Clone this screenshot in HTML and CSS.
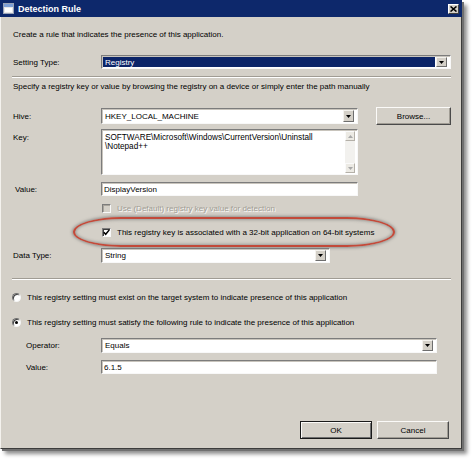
FILE: index.html
```html
<!DOCTYPE html>
<html>
<head>
<meta charset="utf-8">
<link rel="stylesheet" href="styles.css">
</head>
<body>
<div class="dialog">
  <div class="titlebar">
    <svg class="app-icon" width="11" height="11" viewBox="0 0 11 11">
      <rect x="0.5" y="0.5" width="10" height="10" fill="#e8e8e8" stroke="#9aa4b8"/>
      <rect x="1" y="1" width="9" height="3" fill="#7d9fd6"/>
      <rect x="2" y="5" width="7" height="4" fill="#ffffff"/>
    </svg>
    <span class="title">Detection Rule</span>
    <span class="close">
      <svg width="7" height="6" viewBox="0 0 7 6"><path d="M0.5 0.5 L6.5 5.5 M6.5 0.5 L0.5 5.5" stroke="#000" stroke-width="1.6"/></svg>
    </span>
  </div>
  <div class="content">
    <div class="intro">Create a rule that indicates the presence of this application.</div>
    <div class="row setting-row">
      <span class="label">Setting Type:</span>
      <div class="combo combo-selected w-full">
        <span class="combo-text"><span class="sel-text">Registry</span></span>
        <span class="drop"><svg width="5" height="3" viewBox="0 0 5 3"><polygon points="0,0 5,0 2.5,3" fill="#000"/></svg></span>
      </div>
    </div>
    <div class="sep"></div>
    <div class="hint">Specify a registry key or value by browsing the registry on a device or simply enter the path manually</div>
    <div class="row hive-row">
      <span class="label">Hive:</span>
      <div class="combo w-mid">
        <span class="combo-text big">HKEY_LOCAL_MACHINE</span>
        <span class="drop"><svg width="5" height="3" viewBox="0 0 5 3"><polygon points="0,0 5,0 2.5,3" fill="#000"/></svg></span>
      </div>
      <button class="btn browse">Browse...</button>
    </div>
    <div class="row key-row">
      <span class="label label-top">Key:</span>
      <div class="textarea w-mid">
        <div class="ta-text">SOFTWARE\Microsoft\Windows\CurrentVersion\Uninstall<br>\Notepad++</div>
        <div class="scrollbar">
          <span class="sb-btn"><svg width="5" height="3" viewBox="0 0 5 3"><polygon points="0,3 5,3 2.5,0" fill="#a8a8a8"/></svg></span>
          <span class="sb-track"></span>
          <span class="sb-btn"><svg width="5" height="3" viewBox="0 0 5 3"><polygon points="0,0 5,0 2.5,3" fill="#a8a8a8"/></svg></span>
        </div>
      </div>
    </div>
    <div class="row value-row">
      <span class="label label-indent">Value:</span>
      <div class="field w-mid"><span class="field-text">DisplayVersion</span></div>
    </div>
    <div class="row check-row disabled-row">
      <span class="checkbox checkbox-disabled"></span>
      <span class="disabled-text">Use (Default) registry key value for detection</span>
    </div>
    <div class="highlight">
      <span class="checkbox"><svg width="7" height="7" viewBox="0 0 7 7"><path d="M0.8 3.2 L2.7 5.3 L6.3 0.9" fill="none" stroke="#000" stroke-width="1.5"/></svg></span>
      <span class="check-label">This registry key is associated with a 32-bit application on 64-bit systems</span>
    </div>
    <div class="row data-row">
      <span class="label">Data Type:</span>
      <div class="combo w-data">
        <span class="combo-text">String</span>
        <span class="drop"><svg width="5" height="3" viewBox="0 0 5 3"><polygon points="0,0 5,0 2.5,3" fill="#000"/></svg></span>
      </div>
    </div>
    <div class="sep sep-2"></div>
    <div class="row radio-row first-radio">
      <span class="radio"></span>
      <span>This registry setting must exist on the target system to indicate presence of this application</span>
    </div>
    <div class="row radio-row second-radio">
      <span class="radio radio-on"><span class="dot"></span></span>
      <span>This registry setting must satisfy the following rule to indicate the presence of this application</span>
    </div>
    <div class="row sub-row operator-row">
      <span class="label sub-label">Operator:</span>
      <div class="combo w-wide">
        <span class="combo-text">Equals</span>
        <span class="drop"><svg width="5" height="3" viewBox="0 0 5 3"><polygon points="0,0 5,0 2.5,3" fill="#000"/></svg></span>
      </div>
    </div>
    <div class="row sub-row value2-row">
      <span class="label sub-label">Value:</span>
      <div class="field w-wide"><span class="field-text">6.1.5</span></div>
    </div>
    <div class="buttons">
      <button class="btn btn-default">OK</button>
      <button class="btn">Cancel</button>
    </div>
  </div>
</div>
</body>
</html>
```
FILE: styles.css
```css
* {
  box-sizing: border-box;
  margin: 0;
  padding: 0;
}

html, body {
  background: #ffffff;
  width: 474px;
  height: 461px;
  overflow: hidden;
}

body {
  font-family: "Liberation Sans", Arial, sans-serif;
  font-size: 8px;
  color: #000;
}

.dialog {
  width: 462px;
  height: 449px;
  background: #d4d0c8;
  border-left: 1px solid #f4f2ee;
  border-right: 1px solid #3c3c3c;
  border-bottom: 1px solid #3c3c3c;
  box-shadow: 2px 2px 0 #707070, 5px 5px 4px rgba(0, 0, 0, 0.45);
  display: flex;
  flex-direction: column;
}

.titlebar {
  height: 17px;
  flex-shrink: 0;
  background: #0d286b;
  display: flex;
  align-items: center;
  padding: 0 2px 0 2px;
  margin-left: -1px;
  margin-right: -1px;
  color: #fff;
}

.app-icon {
  flex-shrink: 0;
  margin-left: 1px;
}

.title {
  flex: 1;
  font-weight: bold;
  font-size: 9px;
  margin-left: 4px;
}

.close {
  width: 11px;
  height: 10px;
  background: #d4d0c8;
  border: 1px solid;
  border-color: #fff #404040 #404040 #fff;
  display: flex;
  align-items: center;
  justify-content: center;
  margin-right: 1px;
}

.content {
  flex: 1;
  display: flex;
  flex-direction: column;
  padding: 0 10px 9px 12px;
}

.intro {
  height: 12px;
  line-height: 12px;
  margin-top: 12px;
}

.row {
  display: flex;
  align-items: center;
  flex-shrink: 0;
}

.label {
  width: 88px;
  flex-shrink: 0;
}

.label-indent {
  padding-left: 2px;
}

.label-top {
  align-self: flex-start;
  margin-top: 4px;
}

.setting-row {
  height: 14px;
  margin-top: 14px;
}

.sep {
  height: 2px;
  width: 439px;
  margin-left: -1px;
  border-top: 1px solid #a09c94;
  border-bottom: 1px solid #ffffff;
  margin-top: 7px;
  flex-shrink: 0;
}

.sep-2 {
  margin-top: 15px;
}

.hint {
  height: 12px;
  line-height: 12px;
  margin-top: 3px;
}

.combo, .field, .textarea {
  background: #fff;
  border: 1px solid;
  border-color: #7c7c7c #f8f8f8 #f8f8f8 #7c7c7c;
  box-shadow: inset 1px 1px 0 #c8c4bc;
  display: flex;
  align-items: stretch;
  flex-shrink: 0;
}

.combo {
  height: 15px;
  padding: 1px;
}

.field {
  height: 14px;
  align-items: center;
}

.combo-text {
  flex: 1;
  display: flex;
  align-items: center;
  padding-left: 2px;
}

.combo-text.big {
  font-size: 8px;
}

.field-text {
  padding-left: 2px;
}

.combo-selected {
  height: 14px;
}

.combo-selected .combo-text {
  background: #0b2468;
  color: #fff;
  padding-left: 0;
  margin-right: 1px;
}

.sel-text {
  padding-left: 2px;
}

.drop {
  width: 11px;
  background: #d4d0c8;
  border: 1px solid;
  border-color: #f4f2ee #6e6e6e #6e6e6e #f4f2ee;
  display: flex;
  align-items: center;
  justify-content: center;
  margin-right: 2px;
}

.w-full {
  width: 350px;
}

.w-mid {
  width: 257px;
}

.w-data {
  width: 229px;
}

.w-wide {
  width: 336px;
}

.hive-row {
  height: 18px;
  margin-top: 14px;
}

.hive-row .combo {
  height: 16px;
}

.btn {
  font-family: "Liberation Sans", Arial, sans-serif;
  font-size: 8px;
  color: #000;
  background: #d4d0c8;
  border: 1px solid;
  border-color: #fbfaf8 #4a4a4a #4a4a4a #fbfaf8;
  box-shadow: inset -1px -1px 0 #a09c94;
  width: 72px;
  height: 18px;
  flex-shrink: 0;
}

.browse {
  width: 75px;
  margin-left: 18px;
}

.key-row {
  margin-top: 4px;
  align-items: flex-start;
}

.textarea {
  height: 46px;
  padding: 1px 1px 1px 3px;
}

.ta-text {
  flex: 1;
  line-height: 9px;
  padding-top: 2px;
  font-size: 8.2px;
}

.scrollbar {
  width: 10px;
  display: flex;
  flex-direction: column;
  margin-right: 1px;
}

.sb-btn {
  height: 10px;
  background: #eceae4;
  border: 1px solid;
  border-color: #fafafa #b4b0a8 #b4b0a8 #fafafa;
  display: flex;
  align-items: center;
  justify-content: center;
}

.sb-track {
  flex: 1;
  background: #f2f1ee;
}

.value-row {
  height: 14px;
  margin-top: 7px;
}

.check-row {
  height: 12px;
  margin-top: 6px;
  padding-left: 89px;
}

.checkbox {
  width: 9px;
  height: 9px;
  background: #fff;
  border: 1px solid;
  border-color: #7c7c7c #f8f8f8 #f8f8f8 #7c7c7c;
  box-shadow: inset 1px 1px 0 #404040;
  display: flex;
  align-items: center;
  justify-content: center;
  flex-shrink: 0;
}

.checkbox-disabled {
  background: #d4d0c8;
  box-shadow: inset 1px 1px 0 #a8a49c;
}

.disabled-text {
  margin-left: 6px;
  color: #a19d95;
  text-shadow: 1px 1px 0 #fbfaf8;
}

.highlight {
  margin-top: 3px;
  margin-left: 60px;
  width: 322px;
  height: 30px;
  border: 2px solid #c24a3a;
  border-radius: 48px / 15px;
  box-shadow: 0 0 3px 1px rgba(90, 90, 90, 0.55), inset 0 0 3px 1px rgba(90, 90, 90, 0.45);
  display: flex;
  align-items: center;
  padding-left: 27px;
  flex-shrink: 0;
}

.check-label {
  margin-left: 6px;
}

.data-row {
  height: 15px;
  margin-top: 1px;
}

.radio-row {
  height: 12px;
  margin-left: -1px;
}

.first-radio {
  margin-top: 11px;
}

.second-radio {
  margin-top: 13px;
}

.radio {
  width: 9px;
  height: 9px;
  border-radius: 50%;
  background: #fff;
  border: 1px solid;
  border-color: #707070 #f4f4f4 #f4f4f4 #707070;
  box-shadow: inset 1px 1px 0 #404040;
  margin-right: 6px;
  flex-shrink: 0;
  display: flex;
  align-items: center;
  justify-content: center;
}

.dot {
  width: 3px;
  height: 3px;
  border-radius: 50%;
  background: #000;
}

.sub-row {
  padding-left: 13px;
}

.sub-label {
  width: 75px;
}

.operator-row {
  height: 15px;
  margin-top: 10px;
}

.value2-row {
  height: 14px;
  margin-top: 7px;
}

.buttons {
  margin-top: auto;
  display: flex;
  justify-content: flex-end;
  gap: 5px;
  padding-right: 2px;
}

.btn-default {
  border: 1px solid #1a1a1a;
  box-shadow: inset 1px 1px 0 #fbfaf8, inset -1px -1px 0 #6e6e6e;
}
```
